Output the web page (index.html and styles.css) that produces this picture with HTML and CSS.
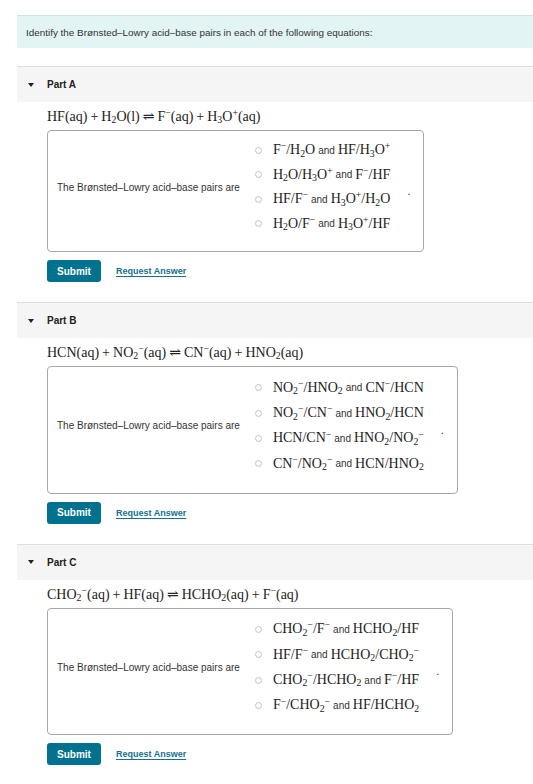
FILE: index.html
```html
<!DOCTYPE html>
<html lang="en">
<head>
<meta charset="utf-8">
<title>Brønsted–Lowry acid–base pairs</title>
<link rel="stylesheet" href="styles.css">
</head>
<body>
<main class="page">
  <div class="intro">Identify the Brønsted–Lowry acid–base pairs in each of the following equations:</div>

  <section class="part">
    <div class="part-head"><span class="caret"></span><span class="part-title">Part A</span></div>
    <div class="part-body">
      <div class="eq math">HF(aq)<span class="op">+</span>H<sub>2</sub>O(l)<span class="op">⇌</span>F<sup>−</sup>(aq)<span class="op">+</span>H<sub>3</sub>O<sup>+</sup>(aq)</div>
      <div class="answer">
        <div class="label">The Brønsted–Lowry acid–base pairs are</div>
        <ul class="options">
          <li><span class="radio"></span><span class="math">F<sup>−</sup>/H<sub>2</sub>O</span><span class="and">and</span><span class="math">HF/H<sub>3</sub>O<sup>+</sup></span></li>
          <li><span class="radio"></span><span class="math">H<sub>2</sub>O/H<sub>3</sub>O<sup>+</sup></span><span class="and">and</span><span class="math">F<sup>−</sup>/HF</span></li>
          <li><span class="radio"></span><span class="math">HF/F<sup>−</sup></span><span class="and">and</span><span class="math">H<sub>3</sub>O<sup>+</sup>/H<sub>2</sub>O</span></li>
          <li><span class="radio"></span><span class="math">H<sub>2</sub>O/F<sup>−</sup></span><span class="and">and</span><span class="math">H<sub>3</sub>O<sup>+</sup>/HF</span></li>
        </ul>
        <span class="period">.</span>
      </div>
      <div class="actions">
        <button class="submit" type="button">Submit</button>
        <a class="request" href="#">Request Answer</a>
      </div>
    </div>
  </section>

  <section class="part">
    <div class="part-head"><span class="caret"></span><span class="part-title">Part B</span></div>
    <div class="part-body">
      <div class="eq math">HCN(aq)<span class="op">+</span>NO<sub>2</sub><sup>−</sup>(aq)<span class="op">⇌</span>CN<sup>−</sup>(aq)<span class="op">+</span>HNO<sub>2</sub>(aq)</div>
      <div class="answer tall">
        <div class="label">The Brønsted–Lowry acid–base pairs are</div>
        <ul class="options">
          <li><span class="radio"></span><span class="math">NO<sub>2</sub><sup>−</sup>/HNO<sub>2</sub></span><span class="and">and</span><span class="math">CN<sup>−</sup>/HCN</span></li>
          <li><span class="radio"></span><span class="math">NO<sub>2</sub><sup>−</sup>/CN<sup>−</sup></span><span class="and">and</span><span class="math">HNO<sub>2</sub>/HCN</span></li>
          <li><span class="radio"></span><span class="math">HCN/CN<sup>−</sup></span><span class="and">and</span><span class="math">HNO<sub>2</sub>/NO<sub>2</sub><sup>−</sup></span></li>
          <li><span class="radio"></span><span class="math">CN<sup>−</sup>/NO<sub>2</sub><sup>−</sup></span><span class="and">and</span><span class="math">HCN/HNO<sub>2</sub></span></li>
        </ul>
        <span class="period">.</span>
      </div>
      <div class="actions">
        <button class="submit" type="button">Submit</button>
        <a class="request" href="#">Request Answer</a>
      </div>
    </div>
  </section>

  <section class="part">
    <div class="part-head"><span class="caret"></span><span class="part-title">Part C</span></div>
    <div class="part-body">
      <div class="eq math">CHO<sub>2</sub><sup>−</sup>(aq)<span class="op">+</span>HF(aq)<span class="op">⇌</span>HCHO<sub>2</sub>(aq)<span class="op">+</span>F<sup>−</sup>(aq)</div>
      <div class="answer tall">
        <div class="label">The Brønsted–Lowry acid–base pairs are</div>
        <ul class="options">
          <li><span class="radio"></span><span class="math">CHO<sub>2</sub><sup>−</sup>/F<sup>−</sup></span><span class="and">and</span><span class="math">HCHO<sub>2</sub>/HF</span></li>
          <li><span class="radio"></span><span class="math">HF/F<sup>−</sup></span><span class="and">and</span><span class="math">HCHO<sub>2</sub>/CHO<sub>2</sub><sup>−</sup></span></li>
          <li><span class="radio"></span><span class="math">CHO<sub>2</sub><sup>−</sup>/HCHO<sub>2</sub></span><span class="and">and</span><span class="math">F<sup>−</sup>/HF</span></li>
          <li><span class="radio"></span><span class="math">F<sup>−</sup>/CHO<sub>2</sub><sup>−</sup></span><span class="and">and</span><span class="math">HF/HCHO<sub>2</sub></span></li>
        </ul>
        <span class="period">.</span>
      </div>
      <div class="actions">
        <button class="submit" type="button">Submit</button>
        <a class="request" href="#">Request Answer</a>
      </div>
    </div>
  </section>
</main>
</body>
</html>
```

FILE: styles.css
```css
html, body {
  margin: 0;
  padding: 0;
  background: #ffffff;
}

body {
  font-family: "Liberation Sans", Arial, Helvetica, sans-serif;
  color: #222;
}

.page {
  margin-left: 17px;
  padding-top: 15px;
}

.intro {
  background: #e2f4f3;
  border-top: 1px solid #d3e3e3;
  height: 33px;
  box-sizing: border-box;
  display: flex;
  align-items: center;
  padding-left: 9px;
  font-size: 9.9px;
  color: #333;
  margin-bottom: 18px;
}

.part {
  margin-bottom: 20px;
}

.part-head {
  background: #f5f5f5;
  border-top: 1px solid #dedede;
  height: 36px;
  box-sizing: border-box;
  display: flex;
  align-items: center;
  padding-left: 11px;
}

.caret {
  width: 0;
  height: 0;
  border-left: 3.5px solid transparent;
  border-right: 3.5px solid transparent;
  border-top: 4px solid #222;
  margin-right: 13px;
}

.part-title {
  font-weight: bold;
  font-size: 10px;
  color: #222;
}

.part-body {
  padding-left: 30px;
}

.math {
  font-family: "Liberation Serif", "DejaVu Serif", serif;
  color: #222;
  white-space: nowrap;
}

.math sub,
.math sup {
  font-size: 0.7em;
  line-height: 0;
  position: relative;
  vertical-align: baseline;
}

.math sub {
  top: 0.25em;
}

.math sup {
  top: -0.5em;
}

.op {
  margin: 0 3px;
}

.eq {
  font-size: 14px;
  line-height: 20px;
  padding-top: 5px;
  margin-bottom: 3px;
}

.answer {
  display: inline-flex;
  align-items: center;
  border: 1px solid #a8a8a8;
  border-radius: 4px;
  padding: 7px 13px 15px 9px;
}

.answer.tall {
  padding-top: 8px;
  padding-bottom: 16px;
}

.label {
  font-size: 10px;
  color: #333;
  white-space: nowrap;
}

.options {
  list-style: none;
  margin: 0 0 0 15px;
  padding: 0;
  display: flex;
  flex-direction: column;
}

.options li {
  height: 24.5px;
  display: flex;
  align-items: center;
}

.answer.tall .options li {
  height: 25.4px;
}

.radio {
  width: 7px;
  height: 7px;
  border-radius: 50%;
  border: 1px solid #c4c4c4;
  box-sizing: border-box;
  background: radial-gradient(circle at 50% 40%, #ffffff 40%, #ececec 100%);
  margin-right: 11px;
  flex: none;
}

.options .math {
  font-size: 14px;
}

.and {
  font-size: 10px;
  color: #333;
  margin: 0 3px;
}

.period {
  font-family: "Liberation Serif", serif;
  font-size: 12px;
  color: #444;
  margin-left: 17px;
  padding-top: 9px;
}

.actions {
  display: flex;
  align-items: center;
  margin-top: 8px;
}

.submit {
  width: 54px;
  height: 22px;
  border: none;
  border-radius: 3px;
  background: #00728f;
  color: #ffffff;
  font-family: "Liberation Sans", Arial, sans-serif;
  font-weight: bold;
  font-size: 10px;
  padding: 0;
}

.request {
  margin-left: 15px;
  font-size: 9px;
  font-weight: bold;
  color: #16718f;
  text-decoration: underline;
  text-underline-offset: 2px;
}
```
